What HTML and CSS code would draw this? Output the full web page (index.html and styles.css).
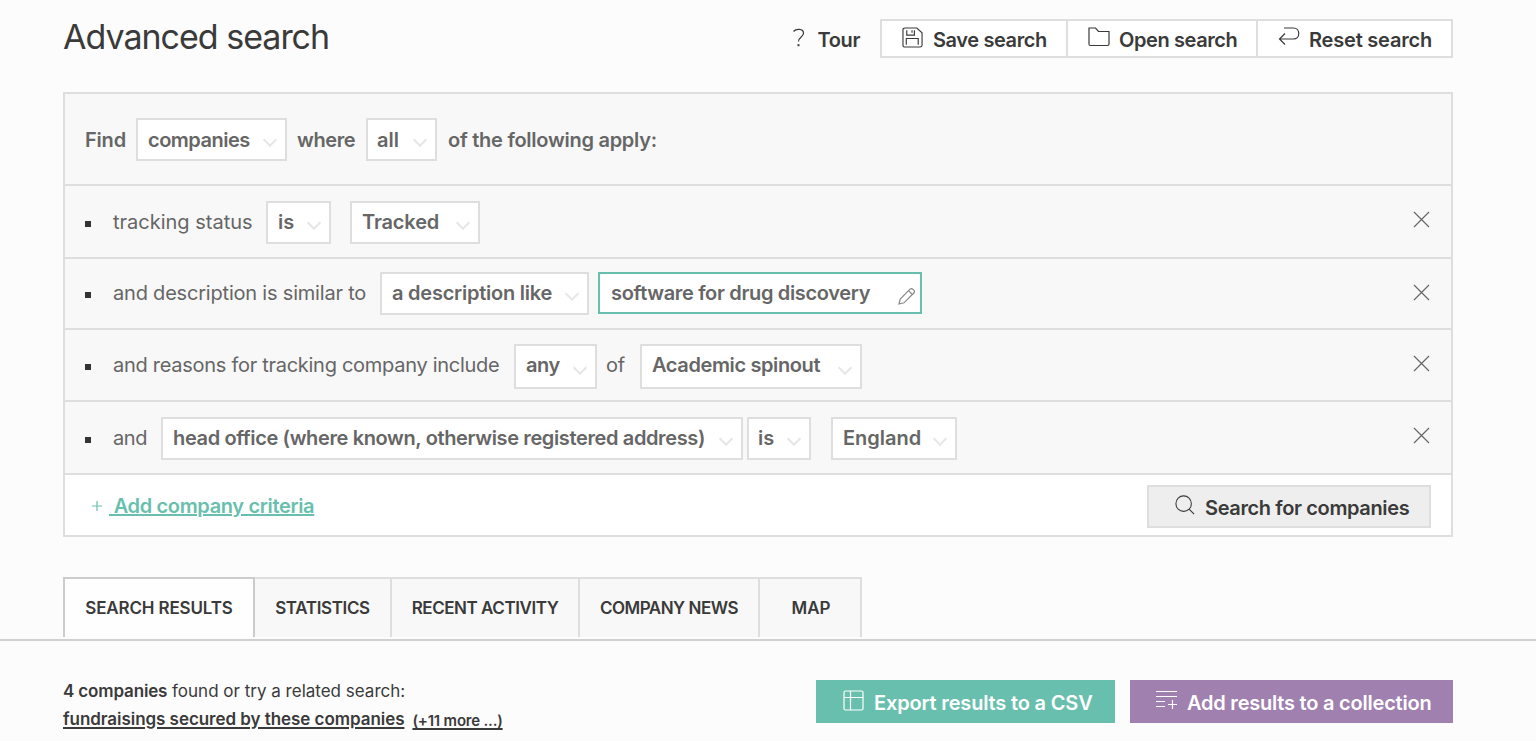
FILE: index.html
```html
<!DOCTYPE html>
<html lang="en">
  <head>
    <meta charset="UTF-8" />
    <meta name="viewport" content="width=device-width, initial-scale=1.0" />
    <title>Advanced search</title>
    <link rel="stylesheet" href="styles.css">
  </head>
  <body>
    <header class="page-header">
      <h1>Advanced search</h1>
      <a class="tour">
        <svg class="tour-icon" width="14" height="20" viewBox="0 0 14 20"><path d="M1.500 3.500C4 .5 11.500 .5 11.500 5.200C11.500 9 6.500 9 6.500 13.500"/><path class="dot" d="M5.500 16.200h2v2h-2z"/></svg>
        Tour
      </a>
      <div class="button-group">
        <button class="save"><svg width="21" height="21" viewBox="0 0 22 22"><path d="M3 1h12.500l5.500 5v13a2 2 0 0 1-2 2H3a2 2 0 0 1-2-2V3a2 2 0 0 1 2-2zM5 3.500v5h8v-5M10.500 3.500v2.500M4.500 18.500v-6.500h12.500v6.500"/></svg>Save search</button>
        <button class="open"><svg width="22" height="22" viewBox="0 0 22 22"><path d="M1 2h6.500l3 3.500H21v12.500a1.500 1.500 0 0 1-1.500 1.500h-17A1.500 1.500 0 0 1 1 18z"/></svg>Open search</button>
        <button class="reset"><svg width="22" height="22" viewBox="0 0 22 22"><path d="M6 2h9.500c7 0 7 11 0 11H1.500M7 7.500l-5.500 5.500 5.500 5.500"/></svg>Reset search</button>
      </div>
    </header>

    <section class="criteria">
      <div class="row head">
        <span class="find">Find</span>
        <div class="select companies">companies<i></i></div>
        <span class="where">where</span>
        <div class="select all">all<i></i></div>
        <span class="apply">of the following apply:</span>
      </div>
      <div class="row tracking">
        <b class="bullet"></b>
        <span>tracking status</span>
        <div class="select is">is<i></i></div>
        <div class="select tracked">Tracked<i></i></div>
        <svg class="close" width="17" height="17" viewBox="0 0 17 17"><path d="M1 1l15 15M16 1L1 16"/></svg>
      </div>
      <div class="row description">
        <b class="bullet"></b>
        <span>and description is similar to</span>
        <div class="select like">a description like<i></i></div>
        <div class="select phrase">software for drug discovery
          <svg width="18" height="18" viewBox="0 0 18 18"><path d="M1 17l1.200-5L12 2.200a2 2 0 0 1 2.800 0l1 1a2 2 0 0 1 0 2.800L6 15.800zM10.500 3.700l3.800 3.800"/></svg>
        </div>
        <svg class="close" width="17" height="17" viewBox="0 0 17 17"><path d="M1 1l15 15M16 1L1 16"/></svg>
      </div>
      <div class="row reasons">
        <b class="bullet"></b>
        <span>and reasons for tracking company include</span>
        <div class="select any">any<i></i></div>
        <span class="of">of</span>
        <div class="select spinout">Academic spinout<i></i></div>
        <svg class="close" width="17" height="17" viewBox="0 0 17 17"><path d="M1 1l15 15M16 1L1 16"/></svg>
      </div>
      <div class="row office">
        <b class="bullet"></b>
        <span>and</span>
        <div class="select address">head office (where known, otherwise registered address)<i></i></div>
        <div class="select is">is<i></i></div>
        <div class="select england">England<i></i></div>
        <svg class="close" width="17" height="17" viewBox="0 0 17 17"><path d="M1 1l15 15M16 1L1 16"/></svg>
      </div>
      <div class="row foot">
        <svg class="plus" width="10" height="10" viewBox="0 0 10 10"><path d="M5 0v10M0 5h10"/></svg>
        <a class="add">&nbsp;Add company criteria</a>
        <button class="search"><svg width="20" height="20" viewBox="0 0 22 22"><circle cx="9.500" cy="9.500" r="8.500"/><path d="M15.500 15.500l5.500 5.500"/></svg>Search for companies</button>
      </div>
    </section>

    <nav class="tabs">
      <a class="tab results active">SEARCH RESULTS</a>
      <a class="tab statistics">STATISTICS</a>
      <a class="tab activity">RECENT ACTIVITY</a>
      <a class="tab news">COMPANY NEWS</a>
      <a class="tab map">MAP</a>
    </nav>

    <div class="summary">
      <div class="found">
        <p><strong>4 companies</strong> found or try a related search:</p>
        <p class="links"><a class="related">fundraisings secured by these companies</a><a class="more">(+11 more ...)</a></p>
      </div>
      <button class="export"><svg width="21" height="21" viewBox="0 0 21 21"><rect x="1" y="1" width="19" height="19" rx="1.500"/><path d="M7.500 1v19M1 7.500h19"/></svg>Export results to a CSV</button>
      <button class="collect"><svg width="21" height="20" viewBox="0 0 21 20"><path d="M0 1.500h21M0 6.500h21M0 11.500h9M0 16.500h9M12 14.500h9M16.500 10v9"/></svg>Add results to a collection</button>
    </div>
  </body>
</html>
```

FILE: styles.css
```css
* {
  box-sizing: border-box;
}

body {
  font-family: Inter, "Public Sans", sans-serif;
  font-size: 20px;
  margin: 0;
  background-color: #fcfcfc;
  color: #3a3a3a;
  height: 741px;
  overflow: hidden;
}

svg {
  fill: none;
  stroke: currentColor;
  stroke-width: 1.2;
  flex: none;
}

.page-header {
  display: flex;
  height: 92px;
  padding: 19px 83px 0 63px;
}

h1 {
  margin: -4px auto 0 0;
  font-size: 34px;
  line-height: 44px;
  font-weight: 400;
  letter-spacing: -1px;
}

button,
.tour {
  display: flex;
  align-items: center;
  font-family: inherit;
  font-size: 20px;
  font-weight: 600;
  letter-spacing: -0.4px;
  color: #3a3a3a;
  white-space: nowrap;
}

.tour {
  height: 41px;
  margin-right: 20px;
}

.tour-icon {
  margin: -4px 12px 0 0;
}

.tour-icon .dot {
  fill: currentColor;
  stroke: none;
}

.button-group {
  display: flex;
  height: 39px;
}

button {
  background-color: #fff;
  border: 2px solid #dedede;
  padding: 2px 0 0 20px;
  margin: 0;
}

.button-group button + button {
  border-left: 0;
}

button svg {
  margin: -5px 9px 0 0;
}

.save {
  width: 188px;
}

.save svg {
  margin-right: 10px;
}

.open {
  width: 190px;
}

.reset {
  width: 195px;
  letter-spacing: -0.2px;
}

.criteria {
  width: 1390px;
  height: 445px;
  margin-left: 63px;
  border: 2px solid #dedede;
}

.row {
  display: flex;
  align-items: flex-start;
  height: 72px;
  padding: 14px 20px 0 20px;
  background-color: #f8f8f8;
  border-bottom: 2px solid #dedede;
  line-height: 43px;
  color: #666;
  white-space: nowrap;
}

.head {
  height: 92px;
  padding-top: 24px;
  font-weight: 600;
  line-height: 44px;
}

.tracking {
  height: 73px;
  padding-top: 15px;
}

.description {
  height: 71px;
  padding-top: 13px;
}

.office {
  height: 73px;
  padding-top: 15px;
}

.foot {
  height: 60px;
  padding-top: 10px;
  background-color: #fff;
  border-bottom: 0;
}

.bullet {
  width: 6px;
  height: 6px;
  margin: 20px 22px 0 0;
  background-color: #333;
}

.select {
  position: relative;
  height: 43px;
  padding-left: 10px;
  line-height: 39px;
  font-weight: 600;
  background-color: #fff;
  border: 2px solid #dedede;
}

.head .select {
  line-height: 40px;
}

.select i {
  position: absolute;
  right: 10px;
  bottom: 14px;
  width: 10px;
  height: 10px;
  border: solid #e6e6e6;
  border-width: 0 2px 2px 0;
  transform: rotate(45deg);
}

.find {
  width: 51px;
  letter-spacing: -0.2px;
}

.companies {
  width: 151px;
  letter-spacing: -0.5px;
}

.where {
  width: 79px;
  padding-left: 10px;
  letter-spacing: -0.4px;
}

.all {
  width: 71px;
  padding-left: 9px;
}

.apply {
  padding-left: 11px;
  letter-spacing: -0.26px;
}

.tracking span {
  width: 153px;
}

.is {
  width: 65px;
}

.tracked {
  width: 130px;
  margin-left: 19px;
  letter-spacing: -0.15px;
}

.description span {
  width: 267px;
  letter-spacing: -0.2px;
}

.like {
  width: 209px;
  letter-spacing: -0.23px;
}

.phrase {
  width: 324px;
  height: 42px;
  margin-left: 9px;
  padding-left: 11px;
  letter-spacing: -0.34px;
  border-color: #68bfad;
}

.phrase svg {
  position: absolute;
  right: 4px;
  bottom: 7px;
  color: #888;
}

.reasons span {
  width: 401px;
  letter-spacing: -0.28px;
}

.reasons .select {
  height: 45px;
}

.any {
  width: 83px;
  letter-spacing: -0.4px;
}

.reasons .of {
  width: 43px;
  padding-left: 9px;
}

.spinout {
  width: 222px;
  letter-spacing: -0.38px;
}

.office span {
  width: 48px;
  letter-spacing: -0.4px;
}

.address {
  width: 582px;
  margin-right: 4px;
  letter-spacing: -0.37px;
}

.office .is {
  width: 64px;
  padding-left: 9px;
}

.england {
  width: 126px;
  margin-left: 20px;
}

.close {
  margin: 10px 1px 0 auto;
  color: #666;
}

.description .close {
  margin-top: 12px;
}

.reasons .close {
  margin-top: 11px;
}

.plus {
  margin: 16px 7px 0 7px;
  color: #68bfad;
}

.add {
  font-weight: 600;
  letter-spacing: -0.35px;
  color: #68bfad;
  text-decoration: underline 2px;
}

.search {
  width: 284px;
  height: 43px;
  margin-left: auto;
  padding-left: 26px;
  letter-spacing: -0.37px;
  background-color: #eee;
}

.search svg {
  margin-right: 10px;
}

.tabs {
  display: flex;
  height: 104px;
  padding: 40px 0 0 63px;
  border-bottom: 2px solid #d0d0d0;
}

.tab {
  height: 60px;
  padding-top: 1px;
  background-color: #f8f8f8;
  border: solid #dedede;
  border-width: 2px 2px 0 0;
  font-size: 17px;
  line-height: 56px;
  font-weight: 600;
  text-align: center;
}

.active {
  background-color: #fefefe;
  border-color: #ccc;
  border-left-width: 2px;
}

.results {
  width: 192px;
  letter-spacing: -0.15px;
}

.statistics {
  width: 137px;
  letter-spacing: -0.35px;
}

.activity {
  width: 188px;
  letter-spacing: -0.45px;
}

.news {
  width: 180px;
  letter-spacing: -0.5px;
}

.map {
  width: 102px;
  padding-left: 2px;
}

.summary {
  display: flex;
  padding: 35px 83px 0 63px;
}

.found {
  margin-right: auto;
}

.found p {
  margin: 0;
  font-size: 17px;
  line-height: 30px;
}

.found .links {
  line-height: 27px;
}

.found strong,
.found a {
  font-weight: 600;
}

.found strong {
  letter-spacing: -0.15px;
}

.found a {
  letter-spacing: -0.05px;
  text-decoration: underline 2px;
  text-underline-offset: 2px;
}

.found .more {
  position: relative;
  top: 1px;
  margin-left: 8px;
  font-size: 15px;
  letter-spacing: -0.2px;
}

.summary button {
  height: 43px;
  margin-top: 4px;
  border: 0;
  padding-left: 27px;
  color: #fff;
}

.summary button svg {
  margin-right: 10px;
}

.summary .export {
  width: 299px;
  letter-spacing: -0.17px;
  background-color: #68bfad;
}

.summary .collect {
  width: 323px;
  margin-left: 15px;
  padding-left: 26px;
  letter-spacing: -0.22px;
  background-color: #a080af;
}
```
